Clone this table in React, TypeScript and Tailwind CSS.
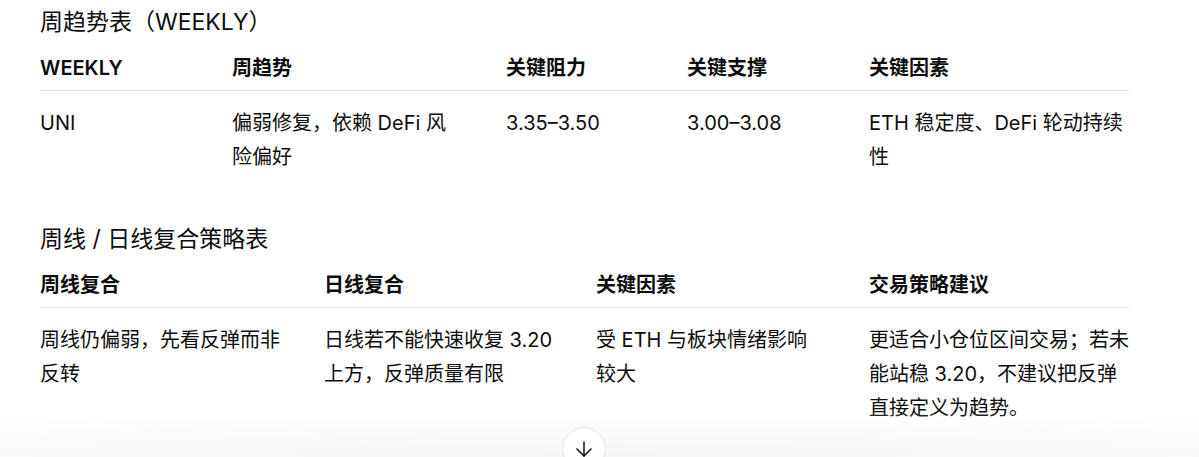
import { ArrowDown } from "lucide-react";

const font = {
  fontFamily: '"Inter", "Noto Sans CJK SC", "Noto Sans", sans-serif',
};

type Table = {
  cols: string;
  head: string[];
  rows: string[][][];
};

const weekly: Table = {
  cols: "grid-cols-[192px_274px_181px_182px_1fr]",
  head: ["WEEKLY", "周趋势", "关键阻力", "关键支撑", "关键因素"],
  rows: [
    [
      ["UNI"],
      ["偏弱修复，依赖 DeFi 风", "险偏好"],
      ["3.35–3.50"],
      ["3.00–3.08"],
      ["ETH 稳定度、DeFi 轮动持续", "性"],
    ],
  ],
};

const combo: Table = {
  cols: "grid-cols-[284px_272px_273px_1fr]",
  head: ["周线复合", "日线复合", "关键因素", "交易策略建议"],
  rows: [
    [
      ["周线仍偏弱，先看反弹而非", "反转"],
      ["日线若不能快速收复 3.20", "上方，反弹质量有限"],
      ["受 ETH 与板块情绪影响", "较大"],
      ["更适合小仓位区间交易；若未", "能站稳 3.20，不建议把反弹", "直接定义为趋势。"],
    ],
  ],
};

function DataTable({ t }: { t: Table }) {
  return (
    <div className="w-[1089px]">
      <div className={`grid ${t.cols} border-b border-[#e3e3e3] pb-2`}>
        {t.head.map((h) => (
          <div key={h} className="text-[20px] font-semibold leading-[28px]">
            {h}
          </div>
        ))}
      </div>
      {t.rows.map((r, i) => (
        <div key={i} className={`grid ${t.cols} pt-[15px] pb-4`}>
          {r.map((lines, j) => (
            <div key={j} className="text-[20px] leading-[34px]">
              {lines.map((l, k) => (
                <div key={k}>{l}</div>
              ))}
            </div>
          ))}
        </div>
      ))}
    </div>
  );
}

export default function App() {
  return (
    <div className="relative h-[457px] w-[1199px] overflow-hidden bg-white text-[#0d0d0d]" style={font}>
      <div className="pl-10 pt-[7px]">
        <h3 className="text-[23px] leading-[30px]">周趋势表（WEEKLY）</h3>
        <div className="mt-[17px]">
          <DataTable t={weekly} />
        </div>
        <h3 className="mt-[34px] text-[23px] leading-[30px]">周线 / 日线复合策略表</h3>
        <div className="mt-[17px]">
          <DataTable t={combo} />
        </div>
      </div>

      <div className="pointer-events-none absolute inset-x-0 bottom-0 h-[56px] bg-[radial-gradient(120%_100%_at_50%_100%,#f6f6f6,rgba(255,255,255,0)_85%)]" />

      <div className="absolute left-[562px] top-[427px] flex h-[44px] w-[44px] items-center justify-center rounded-full border border-[#e3e3e3] bg-white">
        <ArrowDown className="h-6 w-6 text-[#0d0d0d]" strokeWidth={1.5} />
      </div>
    </div>
  );
}
